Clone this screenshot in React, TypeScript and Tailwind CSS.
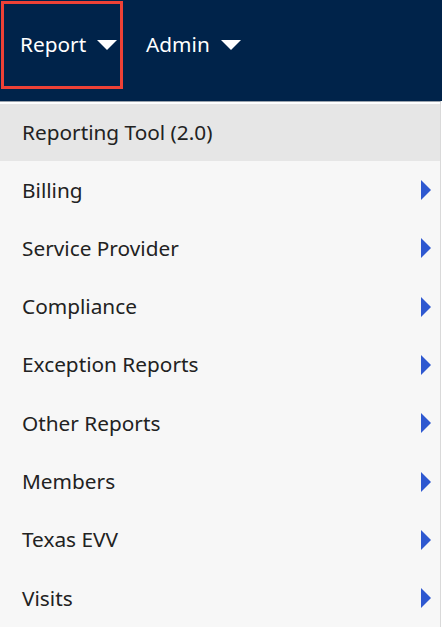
const items = [
  "Billing",
  "Service Provider",
  "Compliance",
  "Exception Reports",
  "Other Reports",
  "Members",
  "Texas EVV",
  "Visits",
];

function Caret() {
  return (
    <svg width="20" height="10" viewBox="0 0 20 10" className="ml-[11px] mt-[1px]">
      <path d="M0 0 H20 L10 10 Z" fill="#ffffff" />
    </svg>
  );
}

function Arrow() {
  return (
    <svg width="10" height="20" viewBox="0 0 10 20">
      <path d="M0 0 L10 10 L0 20 Z" fill="#2e58d0" />
    </svg>
  );
}

export default function App() {
  return (
    <div
      className="w-[442px] h-[628px] overflow-hidden bg-white"
      style={{ fontFamily: '"Noto Sans", "Open Sans", sans-serif' }}
    >
      {/* Top nav */}
      <div className="h-[101px] bg-[#00234a] flex items-start">
        <div className="ml-[1px] mt-[1px] w-[122px] h-[88px] border-[3px] border-[#ee4136] flex items-center pl-[16px] pb-[1px]">
          <span className="text-[20.8px] text-white leading-none">Report</span>
          <Caret />
        </div>
        <div className="ml-[23px] h-[90px] flex items-center pb-[1px]">
          <span className="text-[20.8px] text-white leading-none">Admin</span>
          <Caret />
        </div>
      </div>

      {/* Dropdown */}
      <div className="border-t border-[#9aa3ad] bg-[#f7f7f7] border-r border-r-[#d9d9d9] w-[441px]">
        <div className="h-[2px] bg-white" />
        <div className="h-[57px] bg-[#e6e6e6] flex items-center pl-[22px]">
          <span className="text-[20.8px] text-[#222222]">Reporting Tool (2.0)</span>
        </div>
        {items.map((label) => (
          <div key={label} className="h-[58.3px] flex items-center justify-between pl-[22px] pr-[9px]">
            <span className="text-[20.8px] text-[#222222]">{label}</span>
            <Arrow />
          </div>
        ))}
      </div>
    </div>
  );
}
